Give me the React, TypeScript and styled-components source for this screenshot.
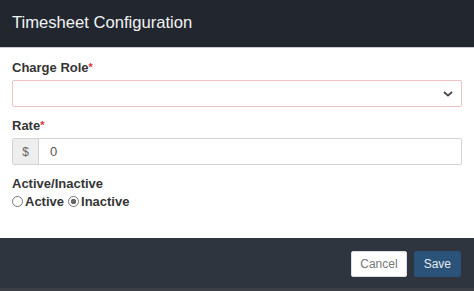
import React from "react";
import styled, { createGlobalStyle } from "styled-components";

const GlobalStyle = createGlobalStyle`
  html, body {
    margin: 0;
    padding: 0;
    background: #ffffff;
    font-family: "Liberation Sans", Arial, sans-serif;
  }
`;

export default function App() {
  return (
    <>
      <GlobalStyle />
      <Modal>
        <Header>
          <Title>Timesheet Configuration</Title>
        </Header>
        <Body>
          <Field>
            <Label>
              Charge Role<Req>*</Req>
            </Label>
            <SelectBox>
              <Chevron viewBox="0 0 10 6" aria-hidden>
                <path d="M1 1l4 3.6L9 1" fill="none" stroke="#444" strokeWidth="1.8" />
              </Chevron>
            </SelectBox>
          </Field>
          <Field>
            <Label>
              Rate<Req>*</Req>
            </Label>
            <InputGroup>
              <Addon>$</Addon>
              <Input defaultValue="0" />
            </InputGroup>
          </Field>
          <Field>
            <Label>Active/Inactive</Label>
            <RadioRow>
              <RadioLabel>
                <Radio />
                Active
              </RadioLabel>
              <RadioLabel>
                <Radio checked />
                Inactive
              </RadioLabel>
            </RadioRow>
          </Field>
        </Body>
        <Footer>
          <Button>Cancel</Button>
          <Button primary>Save</Button>
        </Footer>
      </Modal>
    </>
  );
}

const Modal = styled("div")`
  width: 474px;
  height: 291px;
  display: flex;
  flex-direction: column;
  background: #2f353e;
  border-bottom: 3px solid #3c4046;
  box-sizing: border-box;
`;

const Header = styled("div")`
  height: 47px;
  display: flex;
  align-items: center;
  padding: 0 12px;
  background: #22272f;
  border-bottom: 1px solid #c9cbce;
`;

const Title = styled("div")`
  color: #f2f3f4;
  font-size: 16.6px;
  padding-bottom: 1px;
`;

const Body = styled("div")`
  background: #ffffff;
  padding: 12px 12px 0;
  height: 190px;
  box-sizing: border-box;
  display: flex;
  flex-direction: column;
  gap: 11px;
`;

const Field = styled("div")`
  display: flex;
  flex-direction: column;
  gap: 5px;
`;

const Label = styled("div")`
  font-size: 13px;
  font-weight: bold;
  color: #353535;
  line-height: 15px;
`;

const Req = styled("span")`
  color: #e0303a;
  font-size: 11px;
  vertical-align: top;
`;

const SelectBox = styled("div")`
  height: 27px;
  box-sizing: border-box;
  border: 1px solid #f0c3c3;
  border-radius: 2px;
  display: flex;
  align-items: center;
  justify-content: flex-end;
  padding-right: 8px;
`;

const Chevron = styled("svg")`
  width: 10px;
  height: 6px;
`;

const InputGroup = styled("div")`
  height: 27px;
  display: flex;
  box-sizing: border-box;
  border: 1px solid #d3d3d3;
  border-radius: 2px;
  overflow: hidden;
`;

const Addon = styled("div")`
  width: 25px;
  background: #eeeeee;
  border-right: 1px solid #d3d3d3;
  display: flex;
  align-items: center;
  justify-content: center;
  font-size: 12px;
  color: #666;
`;

const Input = styled("input")`
  flex: 1;
  border: none;
  outline: none;
  padding: 0 11px;
  font-family: "Liberation Sans", Arial, sans-serif;
  font-size: 13px;
  color: #555;
`;

const RadioRow = styled("div")`
  display: flex;
  gap: 4px;
  margin-top: -2px;
`;

const RadioLabel = styled("label")`
  display: flex;
  align-items: center;
  gap: 2px;
  font-size: 13px;
  font-weight: bold;
  color: #353535;
`;

const Radio = styled("span")<{ checked?: boolean }>`
  width: 9px;
  height: 9px;
  border-radius: 50%;
  border: 1px solid #777;
  background: ${(p) => (p.checked ? "radial-gradient(circle, #666 0 2.5px, #fff 3px)" : "#fff")};
`;

const Footer = styled("div")`
  flex: 1;
  display: flex;
  justify-content: flex-end;
  align-items: center;
  gap: 7px;
  padding: 2px 13px 0;
`;

const Button = styled("button")<{ primary?: boolean }>`
  height: 26px;
  padding: 0 ${(p) => (p.primary ? "9px" : "8px")};
  border-radius: 2px;
  border: 1px solid ${(p) => (p.primary ? "#2a5077" : "#ddd")};
  background: ${(p) => (p.primary ? "#2b5279" : "#ffffff")};
  color: ${(p) => (p.primary ? "#e4ebf2" : "#777777")};
  font-family: "Liberation Sans", Arial, sans-serif;
  font-size: 12px;
`;
